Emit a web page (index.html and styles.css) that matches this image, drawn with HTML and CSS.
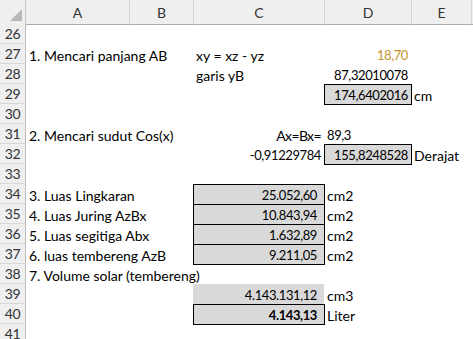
FILE: index.html
```html
<!DOCTYPE html>
<html lang="id">
<head>
<meta charset="utf-8">
<title>Sheet</title>
<link rel="stylesheet" href="styles.css">
</head>
<body>
<div class="sheet">
  <div class="row head">
    <div class="corner"><svg width="26" height="24" viewBox="0 0 26 24"><polygon points="22,9 22,21 10,21" fill="#b8b8b8"/></svg></div>
    <div class="ch">A</div>
    <div class="ch">B</div>
    <div class="ch">C</div>
    <div class="ch">D</div>
    <div class="ch">E</div>
    <div class="ch"></div>
  </div>

  <div class="row"><div class="rh">26</div></div>

  <div class="row">
    <div class="rh">27</div>
    <div class="cell a">1. Mencari panjang AB</div>
    <div class="cell c">xy = xz - yz</div>
    <div class="cell d num n gold">18,70</div>
  </div>

  <div class="row">
    <div class="rh">28</div>
    <div class="cell c">garis yB</div>
    <div class="cell d num n">87,32010078</div>
  </div>

  <div class="row">
    <div class="rh">29</div>
    <div class="cell d num n box">174,6402016</div>
    <div class="cell e">cm</div>
  </div>

  <div class="row"><div class="rh">30</div></div>

  <div class="row">
    <div class="rh">31</div>
    <div class="cell a">2. Mencari sudut Cos(x)</div>
    <div class="cell c num tight">Ax=Bx=</div>
    <div class="cell d n">89,3</div>
  </div>

  <div class="row">
    <div class="rh">32</div>
    <div class="cell c num n">-0,91229784</div>
    <div class="cell d num n box">155,8248528</div>
    <div class="cell e">Derajat</div>
  </div>

  <div class="row"><div class="rh">33</div></div>

  <div class="row">
    <div class="rh">34</div>
    <div class="cell a">3. Luas Lingkaran</div>
    <div class="cell c num n acc box">25.052,60</div>
    <div class="cell d">cm2</div>
  </div>

  <div class="row">
    <div class="rh">35</div>
    <div class="cell a">4. Luas Juring AzBx</div>
    <div class="cell c num n acc box">10.843,94</div>
    <div class="cell d">cm2</div>
  </div>

  <div class="row">
    <div class="rh">36</div>
    <div class="cell a">5. Luas segitiga Abx</div>
    <div class="cell c num n acc box">1.632,89</div>
    <div class="cell d">cm2</div>
  </div>

  <div class="row">
    <div class="rh">37</div>
    <div class="cell a">6. luas tembereng AzB</div>
    <div class="cell c num n acc box">9.211,05</div>
    <div class="cell d">cm2</div>
  </div>

  <div class="row">
    <div class="rh">38</div>
    <div class="cell a">7. Volume solar (tembereng)</div>
  </div>

  <div class="row">
    <div class="rh">39</div>
    <div class="cell c num n acc fill">4.143.131,12</div>
    <div class="cell d">cm3</div>
  </div>

  <div class="row">
    <div class="rh">40</div>
    <div class="cell c num n acc box bold">4.143,13</div>
    <div class="cell d">Liter</div>
  </div>

  <div class="row"><div class="rh">41</div></div>
</div>
</body>
</html>
```

FILE: styles.css
```css
html, body {
  margin: 0;
  padding: 0;
  background: #ffffff;
  overflow: hidden;
}

.sheet {
  width: 473px;
  height: 339px;
  overflow: hidden;
  font-family: Lato, "Liberation Sans", sans-serif;
  font-size: 14px;
  color: #000;
}

.row {
  display: grid;
  grid-template-columns: 26px 103px 64px 131px 87px 60px 1fr;
  height: 20px;
}

.row.head {
  height: 24px;
}

.corner {
  grid-column: 1;
  background: #efefef;
  border-right: 1px solid #c8c8c8;
  border-bottom: 1px solid #ababab;
  box-sizing: border-box;
}

.corner svg {
  display: block;
}

.ch {
  background: #efefef;
  border-left: 1px solid #d4d4d4;
  border-bottom: 1px solid #ababab;
  box-sizing: border-box;
  display: flex;
  align-items: center;
  justify-content: center;
  color: #333;
  line-height: 17px;
}

.row.head .ch:nth-child(2) {
  border-left: none;
}

.rh {
  grid-column: 1;
  background: #efefef;
  border-right: 1px solid #bdbdbd;
  border-bottom: 1px solid #d8d8d8;
  box-sizing: border-box;
  display: flex;
  align-items: flex-end;
  justify-content: center;
  color: #333;
  line-height: 17px;
  padding-bottom: 1px;
  letter-spacing: -0.3px;
}

.cell {
  box-sizing: border-box;
  display: flex;
  align-items: flex-end;
  padding: 0 3px 0 3px;
  line-height: 17px;
  white-space: nowrap;
  min-width: 0;
}

.a { grid-column: 2; padding-left: 3px; }
.c { grid-column: 4; }
.d { grid-column: 5; }
.e { grid-column: 6; }

.num {
  justify-content: flex-end;
  padding-right: 3px;
}

.n {
  font-size: 13px;
  font-variant-numeric: tabular-nums;
  letter-spacing: -0.4px;
  line-height: 16px;
  padding-bottom: 1px;
}

.tight {
  letter-spacing: -0.6px;
}

.acc {
  padding-right: 7px;
}

.gold {
  color: #c4922c;
}

.box {
  background: #d9d9d9;
  border-top: 1px solid #000;
  border-left: 1px solid #000;
  box-shadow: 1px 0 0 #000, 0 1px 0 #000, 1px 1px 0 #000;
}

.fill {
  background: #d9d9d9;
}

.bold {
  font-weight: 700;
}
```
